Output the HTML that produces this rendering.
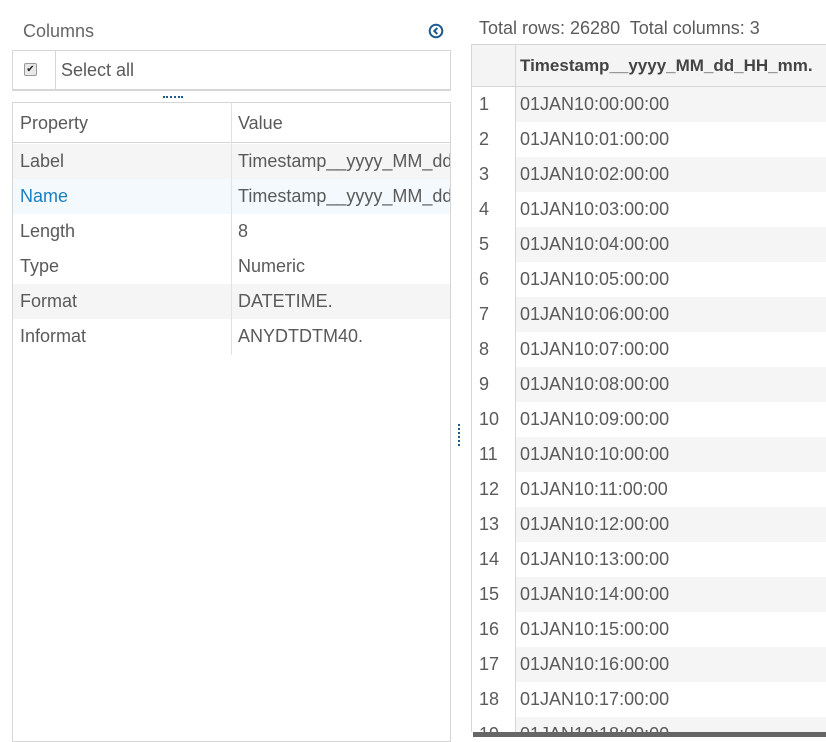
<!DOCTYPE html>
<html><head><style>
*{box-sizing:border-box;margin:0;padding:0}
body{width:826px;height:737px;overflow:hidden;background:#fff;font-family:"Liberation Sans",sans-serif;color:#5a5a5a;font-size:18px;position:relative}
.abs{position:absolute}
.row{position:absolute;left:0;height:35px;line-height:35px;width:100%}
</style></head><body>
<div class="abs" style="left:23px;top:21px;font-size:18px;color:#666">Columns</div>
<svg class="abs" style="left:428px;top:23px" width="16" height="16" viewBox="0 0 16 16"><circle cx="8" cy="8" r="6.3" fill="none" stroke="#1d5b8f" stroke-width="2"/><path d="M9.3 5 L6.3 8 L9.3 11" fill="none" stroke="#1d5b8f" stroke-width="2"/></svg>
<div class="abs" style="left:12px;top:50px;width:439px;height:41px;border:1px solid #d6d6d6;border-bottom:2px solid #d6d6d6"></div>
<div class="abs" style="left:55px;top:51px;width:1px;height:39px;background:#d6d6d6"></div>
<div class="abs" style="left:24px;top:63px;width:13px;height:13px;border:1px solid #999;border-radius:2px;background:#e8e8e8;font-size:10px;line-height:11px;text-align:center;color:#222">✔</div>
<div class="abs" style="left:61px;top:60px;color:#5a5a5a">Select all</div>
<div class="abs" style="left:163px;top:96px;width:20px;height:2px;border-top:2px dotted #1d5b8f"></div>
<div class="abs" style="left:12px;top:102px;width:439px;height:640px;border:1px solid #d6d6d6;overflow:hidden">
 <div class="row" style="top:0;height:40px;line-height:40px;border-bottom:1px solid #d6d6d6"><span class="abs" style="left:7px">Property</span><span class="abs" style="left:225px">Value</span></div>
 <div class="row" style="top:41px;background:#f5f5f5"><span class="abs" style="left:7px">Label</span><span class="abs" style="left:225px;white-space:nowrap">Timestamp__yyyy_MM_dd</span></div>
 <div class="row" style="top:76px;background:#f3f9fc"><span class="abs" style="left:7px;color:#1a7ec2">Name</span><span class="abs" style="left:225px;white-space:nowrap">Timestamp__yyyy_MM_dd</span></div>
 <div class="row" style="top:111px"><span class="abs" style="left:7px">Length</span><span class="abs" style="left:225px">8</span></div>
 <div class="row" style="top:146px"><span class="abs" style="left:7px">Type</span><span class="abs" style="left:225px">Numeric</span></div>
 <div class="row" style="top:181px;background:#f5f5f5"><span class="abs" style="left:7px">Format</span><span class="abs" style="left:225px">DATETIME.</span></div>
 <div class="row" style="top:216px"><span class="abs" style="left:7px">Informat</span><span class="abs" style="left:225px">ANYDTDTM40.</span></div>
 <div class="abs" style="left:218px;top:0;width:1px;height:252px;background:#e2e2e2"></div>
</div>
<div class="abs" style="left:458px;top:424px;width:2px;height:22px;border-left:2px dotted #1d5b8f"></div>
<div class="abs" style="left:479px;top:18px;color:#5a5a5a">Total rows: 26280&nbsp; Total columns: 3</div>
<div class="abs" style="left:471px;top:44px;width:360px;height:688px;border:1px solid #d6d6d6;border-bottom:none;overflow:hidden" id="g">
 <div class="abs" style="left:0;top:0;width:100%;height:42px;background:#f4f4f4;border-bottom:1px solid #d6d6d6"></div>
 <div class="abs" style="left:48px;top:11px;font-weight:bold;font-size:17px;color:#444;white-space:nowrap">Timestamp__yyyy_MM_dd_HH_mm.</div>
 <div class="abs" style="left:43px;top:0;width:1px;height:700px;background:#d6d6d6"></div>
</div>
<script>
var g=document.getElementById('g'),h='';
for(var i=0;i<19;i++){var t=42+i*35;var m=('0'+i).slice(-2);
h+='<div class="abs" style="left:44px;top:'+t+'px;width:320px;height:35px;background:'+(i%2==0?'#f5f5f5':'#fff')+'"></div>'+
'<div class="abs" style="left:7px;top:'+t+'px;line-height:35px">'+(i+1)+'</div>'+
'<div class="abs" style="left:48px;top:'+t+'px;line-height:35px">01JAN10:'+m+':00:00</div>';}
g.insertAdjacentHTML('beforeend',h);
</script>
<div class="abs" style="left:473px;top:732px;width:353px;height:5px;background:#666"></div>
</body></html>
